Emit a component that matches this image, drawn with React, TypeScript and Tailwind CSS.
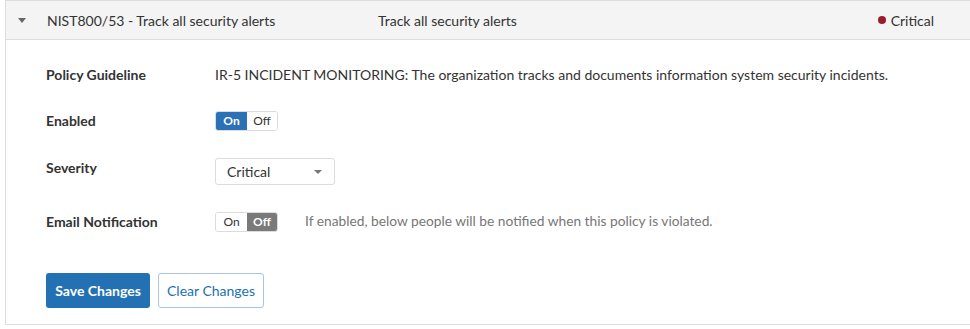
import React from 'react'

const font = { fontFamily: 'Lato, "Open Sans", sans-serif' }

function Toggle({ on }: { on: boolean }) {
  return (
    <div className="flex h-[20px] w-[63px] overflow-hidden rounded-[3px] border border-[#dcdcdc] text-[12px] leading-[18px]">
      <span
        className={`flex w-[31px] items-center justify-center ${
          on ? 'bg-[#2a72b5] font-bold text-white' : 'bg-white text-[#333]'
        }`}
      >
        On
      </span>
      <span
        className={`flex flex-1 items-center justify-center ${
          on ? 'bg-white text-[#333]' : 'bg-[#7a7a7a] font-bold text-white'
        }`}
      >
        Off
      </span>
    </div>
  )
}

export default function App() {
  return (
    <div className="bg-white" style={font}>
      <div className="ml-[5px] w-[975px] border border-[#dddddd] text-[14px] text-[#333]">
        {/* cabecera */}
        <div className="flex h-[39px] items-center border-b border-[#dddddd] bg-[#f4f4f4]">
          <span className="ml-[12px] w-[29px] text-[#666]">
            <svg width="8" height="5" viewBox="0 0 8 5">
              <path d="M0 0 L8 0 L4 5 Z" fill="#666" />
            </svg>
          </span>
          <span className="w-[331px]">NIST800/53 - Track all security alerts</span>
          <span className="flex-1">Track all security alerts</span>
          <span className="mr-[45px] flex items-center">
            <span className="mr-[5px] h-[8px] w-[8px] rounded-full bg-[#9b1c2a]" />
            Critical
          </span>
        </div>

        {/* cuerpo */}
        <div className="pb-[16px] pl-[40px] pt-[24px]">
          <div className="flex h-[20px] items-center">
            <span className="w-[169px] font-bold">Policy Guideline</span>
            <span>
              IR-5 INCIDENT MONITORING: The organization tracks and documents information system security incidents.
            </span>
          </div>

          <div className="mt-[26px] flex items-center">
            <span className="w-[169px] font-bold">Enabled</span>
            <Toggle on />
          </div>

          <div className="mt-[27px] flex items-start">
            <span className="w-[169px] font-bold leading-[20px]">Severity</span>
            <div className="flex h-[27px] w-[120px] items-center justify-between rounded-[3px] border border-[#dcdcdc] pl-[11px] pr-[12px]">
              <span>Critical</span>
              <svg width="8" height="4" viewBox="0 0 8 4">
                <path d="M0 0 L8 0 L4 4 Z" fill="#777" />
              </svg>
            </div>
          </div>

          <div className="mt-[26px] flex items-center">
            <span className="w-[169px] font-bold">Email Notification</span>
            <Toggle on={false} />
            <span className="ml-[27px] text-[13.75px] text-[#777]">
              If enabled, below people will be notified when this policy is violated.
            </span>
          </div>

          <div className="mt-[41px] flex gap-[8px]">
            <button
              type="button"
              className="h-[35px] w-[104px] rounded-[3px] bg-[#2371b3] text-[14px] font-bold text-white"
            >
              Save Changes
            </button>
            <button
              type="button"
              className="h-[35px] w-[106px] rounded-[3px] border border-[#a8c6e0] bg-white text-[14px] text-[#2371b3]"
            >
              Clear Changes
            </button>
          </div>
        </div>
      </div>
    </div>
  )
}
